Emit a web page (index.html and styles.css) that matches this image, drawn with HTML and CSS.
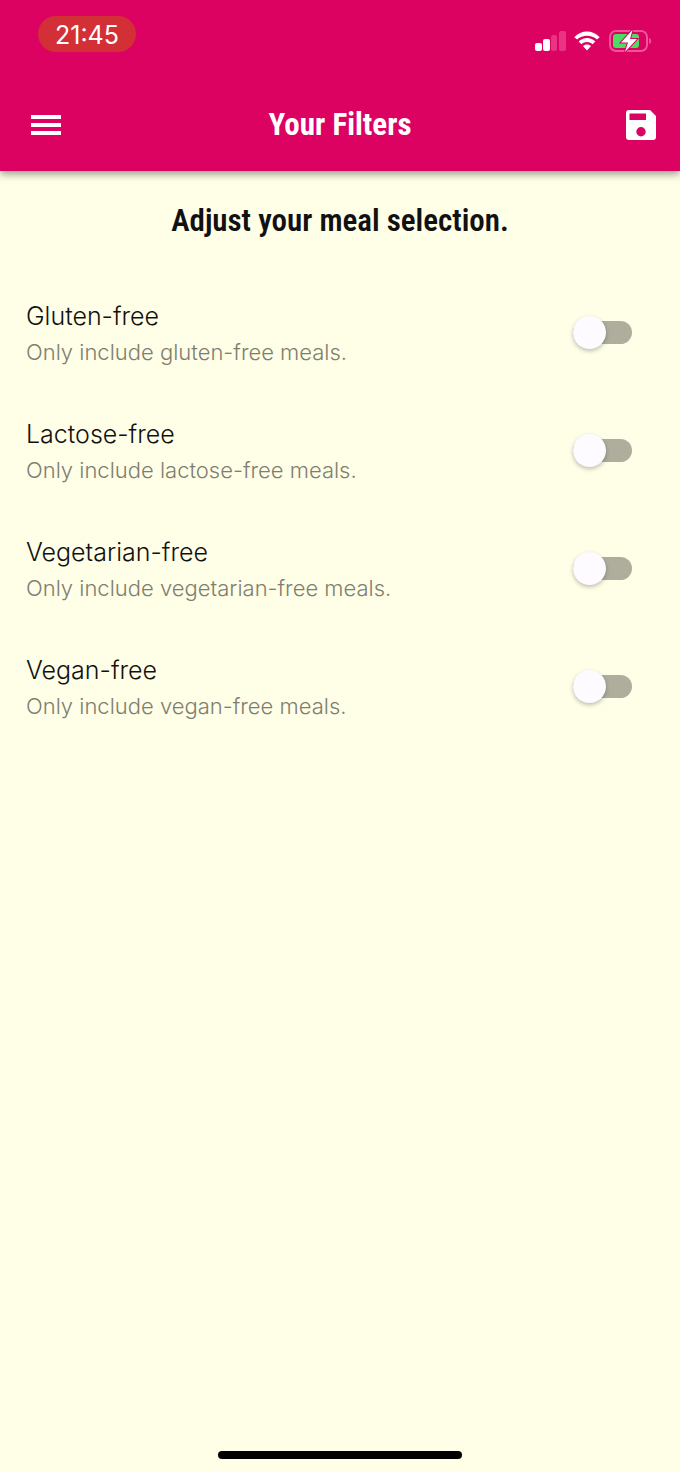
FILE: index.html
```html
<!DOCTYPE html>
<html lang="en">
<head>
<meta charset="utf-8">
<meta name="viewport" content="width=device-width, initial-scale=1">
<title>Your Filters</title>
<link rel="stylesheet" href="styles.css">
</head>
<body>
<div class="screen">
  <header class="header">
    <div class="status">
      <time class="clock">21:45</time>
      <div class="indicators">
        <svg class="signal" viewBox="0 0 31 20" aria-hidden="true">
          <rect x="0" y="12" width="7" height="8" rx="2"/>
          <rect x="8" y="8" width="7" height="12" rx="2"/>
          <rect class="dim" x="16" y="4" width="6" height="16" rx="2"/>
          <rect class="dim" x="24" y="0" width="7" height="20" rx="2"/>
        </svg>
        <svg class="wifi" viewBox="0 0 26 20" aria-hidden="true">
          <path d="M0.3 6.2C7-1.3 19-1.3 25.7 6.2L22.900 8.500C17.500 3.600 8.500 3.600 3.100 8.500Z"/>
          <path d="M4.600 10.600C9.300 5.800 16.700 5.800 21.400 10.600L18.600 13.200C15.500 10.300 10.500 10.300 7.400 13.200Z"/>
          <path d="M8.900 15.100C11.200 12.900 14.800 12.900 17.100 15.100L13 19.500Z"/>
        </svg>
        <svg class="battery" viewBox="0 0 44 24" aria-hidden="true">
          <rect class="shell" x="2" y="2" width="37" height="20" rx="6"/>
          <path class="tip" d="M41 9v6c3-.8 3-5.200 0-6z"/>
          <rect class="charge" x="5" y="5" width="26" height="14" rx="3"/>
          <path class="bolt" d="M24.500 1L13 13.500h7L17 23 29 10h-7z"/>
        </svg>
      </div>
    </div>
    <nav class="toolbar">
      <button class="icon-button menu" type="button" aria-label="Open menu">
        <svg viewBox="0 0 30 30" aria-hidden="true"><path d="M0 5h30v4H0zM0 13h30v4H0zM0 21h30v4H0z"/></svg>
      </button>
      <h1 class="title">Your Filters</h1>
      <button class="icon-button save" type="button" aria-label="Save filters">
        <svg viewBox="0 0 30 30" aria-hidden="true"><path fill-rule="evenodd" d="M3 0h21l6 6v21a3 3 0 0 1-3 3H3a3 3 0 0 1-3-3V3a3 3 0 0 1 3-3zM3.500 3.500v6.500H20V3.500zM15 17a4.700 4.700 0 1 0 0 9.400 4.700 4.700 0 0 0 0-9.400z"/></svg>
      </button>
    </nav>
  </header>
  <main class="content">
    <h2 class="heading">Adjust your meal selection.</h2>
    <form class="filters">
      <label class="filter">
        <span class="texts"><span class="name">Gluten-free</span><span class="detail">Only include gluten-free meals.</span></span>
        <input class="switch" type="checkbox" role="switch">
      </label>
      <label class="filter">
        <span class="texts"><span class="name">Lactose-free</span><span class="detail">Only include lactose-free meals.</span></span>
        <input class="switch" type="checkbox" role="switch">
      </label>
      <label class="filter">
        <span class="texts"><span class="name">Vegetarian-free</span><span class="detail">Only include vegetarian-free meals.</span></span>
        <input class="switch" type="checkbox" role="switch">
      </label>
      <label class="filter">
        <span class="texts"><span class="name">Vegan-free</span><span class="detail">Only include vegan-free meals.</span></span>
        <input class="switch" type="checkbox" role="switch">
      </label>
    </form>
  </main>
  <footer class="home"><div class="home-bar"></div></footer>
</div>
</body>
</html>
```
FILE: styles.css
```css
* {
  box-sizing: border-box;
}

body {
  margin: 0;
  background: #fffee7;
  color: #111;
  font-family: Inter, Roboto, sans-serif;
}

.screen {
  display: flex;
  flex-direction: column;
  min-height: 100vh;
}

.header {
  background: #db0262;
  color: #fff;
  box-shadow: 0 3px 8px rgba(0, 0, 0, 0.4);
}

.status {
  display: flex;
  justify-content: space-between;
  align-items: flex-start;
  padding: 16px 28px 0 38px;
}

.clock {
  padding: 3px 17px 1px;
  border-radius: 18px;
  background: #d32f37;
  font-size: 25px;
  font-weight: 400;
  line-height: 32px;
}

.indicators {
  display: flex;
  align-items: center;
  gap: 8px;
  padding-top: 13px;
}

.indicators svg {
  display: block;
  fill: #fff;
}

.signal {
  width: 31px;
  height: 20px;
}

.signal .dim {
  fill: #e83482;
}

.wifi {
  width: 26px;
  height: 20px;
}

.battery {
  width: 44px;
  height: 24px;
}

.battery .shell {
  fill: none;
  stroke: #ee5598;
  stroke-width: 2;
}

.battery .tip {
  fill: #ee5598;
}

.battery .charge {
  fill: #4fdb62;
}

.battery .bolt {
  stroke: #db0262;
  stroke-width: 2;
  paint-order: stroke;
}

.toolbar {
  display: grid;
  grid-template-columns: 1fr auto 1fr;
  align-items: center;
  padding: 52px 24px 26px;
}

.icon-button {
  display: flex;
  padding: 0;
  border: 0;
  background: none;
  color: inherit;
}

.menu {
  justify-self: start;
  padding-left: 7px;
}

.save {
  justify-self: end;
}

.icon-button svg {
  width: 30px;
  height: 30px;
  fill: currentColor;
}

.title,
.heading {
  margin: 0;
  font-family: "Roboto Condensed", "Liberation Sans Narrow", Roboto, sans-serif;
  font-size: 31px;
  line-height: 40px;
  text-align: center;
}

.title {
  font-weight: 700;
}

.content {
  flex: 1;
  padding-top: 30px;
}

.heading {
  font-weight: 600;
}

.filters {
  padding-top: 32px;
}

.filter {
  display: flex;
  align-items: center;
  justify-content: space-between;
  gap: 24px;
  height: 118px;
  padding: 0 48px 0 26px;
}

.texts {
  display: flex;
  flex-direction: column;
  padding-top: 4px;
}

.name {
  font-size: 25px;
  line-height: 36px;
}

.detail {
  color: #7e7e70;
  font-size: 22px;
  line-height: 36px;
}

.name,
.detail {
  font-weight: 300;
}

.switch {
  display: flex;
  flex: none;
  align-items: center;
  width: 59px;
  height: 23px;
  margin: 0;
  border-radius: 12px;
  appearance: none;
  background: #afae9d;
}

.switch::before {
  flex: none;
  width: 33px;
  height: 33px;
  border-radius: 50%;
  background: #fdfbff;
  box-shadow: 0 2px 4px rgba(0, 0, 0, 0.25);
  content: "";
}

.switch:checked {
  justify-content: flex-end;
  background: #ed80b0;
}

.switch:checked::before {
  background: #db0262;
}

.home {
  display: flex;
  justify-content: center;
  padding-bottom: 13px;
}

.home-bar {
  width: 36%;
  height: 8px;
  border-radius: 4px;
  background: #000;
}
```
